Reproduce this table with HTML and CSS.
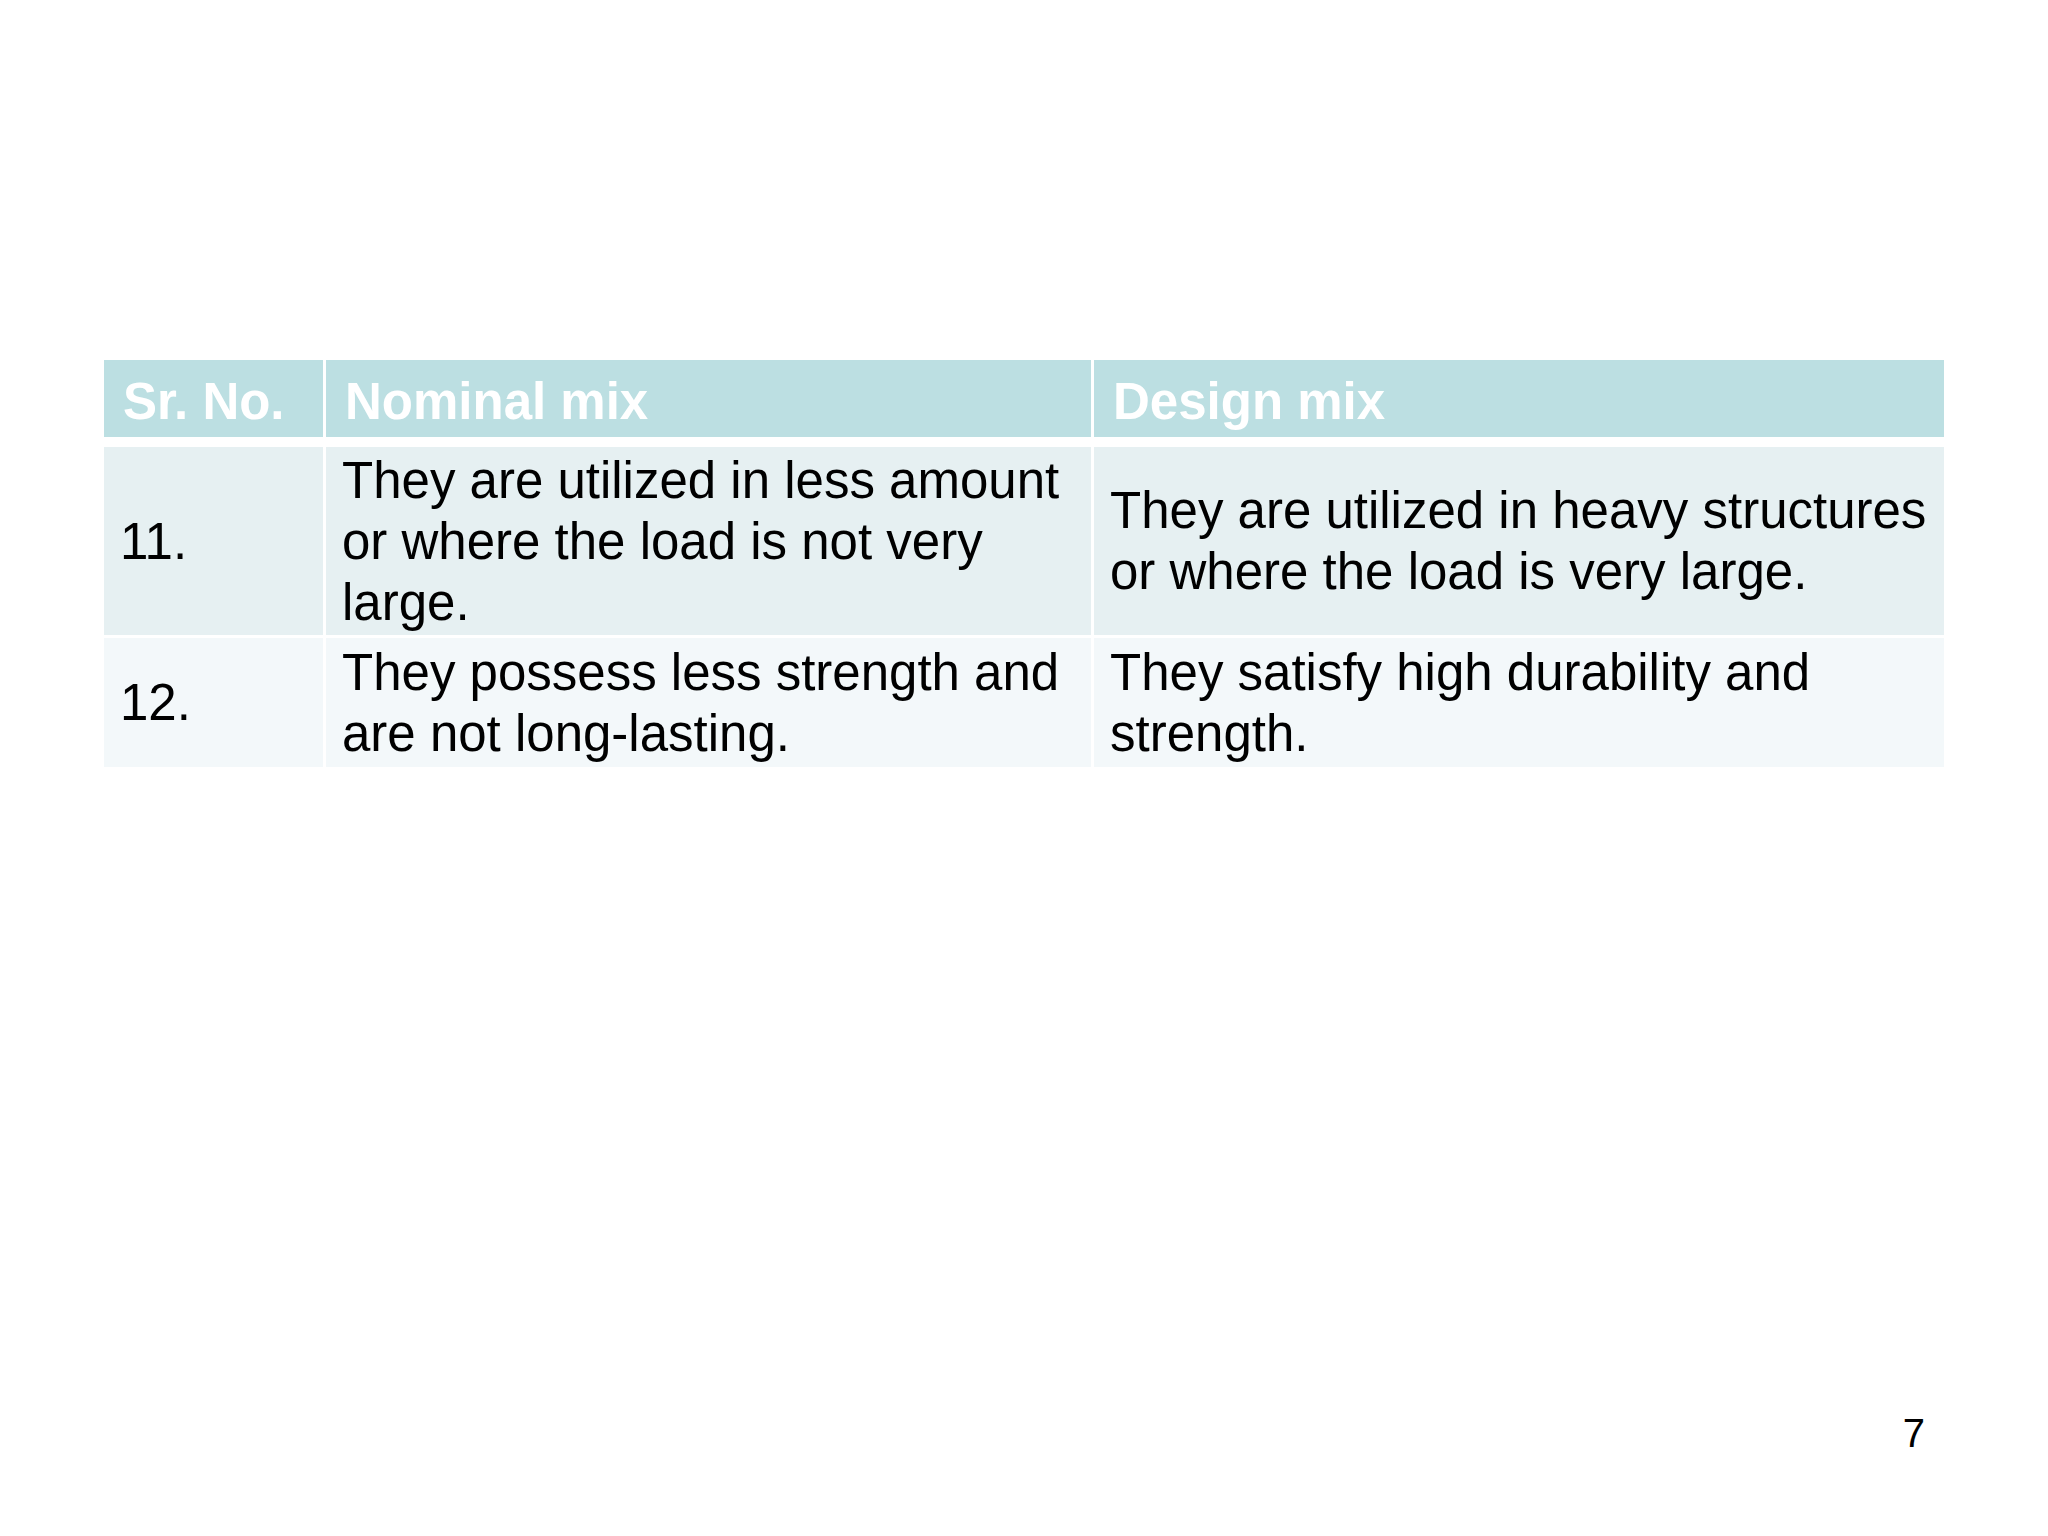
FILE: index.html
```html
<!DOCTYPE html>
<html lang="en">
<head>
<meta charset="utf-8">
<title>Nominal mix vs Design mix</title>
<link rel="stylesheet" href="styles.css">
</head>
<body>
<div class="slide">
  <div class="mix-table">
    <div class="cell head c1">Sr. No.</div>
    <div class="cell head c2">Nominal mix</div>
    <div class="cell head c3">Design mix</div>

    <div class="cell odd c1">11.</div>
    <div class="cell odd c2">They are utilized in less amount or where the load is not very large.</div>
    <div class="cell odd c3">They are utilized in heavy structures or where the load is very large.</div>

    <div class="cell even c1">12.</div>
    <div class="cell even c2">They possess less strength and are not long-lasting.</div>
    <div class="cell even c3">They satisfy high durability and strength.</div>
  </div>
  <div class="page-number">7</div>
</div>
</body>
</html>
```

FILE: styles.css
```css
html, body {
  margin: 0;
  padding: 0;
  background: #ffffff;
}

.slide {
  width: 2048px;
  height: 1536px;
  box-sizing: border-box;
  padding-top: 360px;
  display: flex;
  flex-direction: column;
  font-family: "Liberation Sans", Arial, sans-serif;
  color: #000000;
}

.mix-table {
  margin-left: 104px;
  width: 1840px;
  display: grid;
  grid-template-columns: 219px 765px 850px;
  grid-template-rows: 84px 188px 129px;
  column-gap: 3px;
  row-gap: 3px;
  background: #ffffff;
}

.cell {
  display: flex;
  align-items: center;
  box-sizing: border-box;
  padding: 0 8px 0 16px;
  font-size: 51px;
  line-height: 61px;
}

.head {
  background: #bcdfe2;
  color: #ffffff;
  font-weight: bold;
  border-bottom: 7px solid #ffffff;
  padding-top: 5px;
  padding-left: 19px;
  padding-bottom: 0;
}

.odd {
  background: #e6f0f2;
}

.even {
  background: #f3f8fa;
}

.page-number {
  margin-top: auto;
  align-self: flex-end;
  margin-right: 123px;
  margin-bottom: 79px;
  font-size: 40px;
  line-height: 48px;
}
```
